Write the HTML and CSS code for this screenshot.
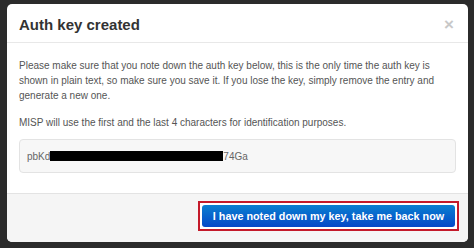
FILE: index.html
```html
<!DOCTYPE html>
<html>
<head>
<meta charset="utf-8">
<link rel="stylesheet" href="styles.css">
</head>
<body>
<div class="modal">
  <div class="modal-header">
    <h3 class="title">Auth key created</h3>
    <span class="close">×</span>
  </div>
  <div class="modal-body">
    <p class="para">Please make sure that you note down the auth key below, this is the only time the auth key is shown in plain text, so make sure you save it. If you lose the key, simply remove the entry and generate a new one.</p>
    <p class="para">MISP will use the first and the last 4 characters for identification purposes.</p>
    <div class="keybox"><span>pbKd</span><span class="redact"></span><span>74Ga</span></div>
  </div>
  <div class="modal-footer">
    <span class="highlight"><span class="btn">I have noted down my key, take me back now</span></span>
  </div>
</div>
</body>
</html>
```
FILE: styles.css
```css
html, body {
  margin: 0;
  padding: 0;
}
body {
  background: #2b2b2b;
  width: 474px;
  height: 248px;
  padding: 4px 6px 6px 7px;
  box-sizing: border-box;
  font-family: "Liberation Sans", Arial, sans-serif;
}
.modal {
  background: #fff;
  border-radius: 5px;
  width: 461px;
  height: 238px;
  display: flex;
  flex-direction: column;
  overflow: hidden;
}
.modal-header {
  height: 39px;
  box-sizing: border-box;
  border-bottom: 1px solid #e8e8e8;
  display: flex;
  align-items: center;
  justify-content: space-between;
  padding: 3px 14px 0 12px;
}
.title {
  margin: 0;
  font-size: 15px;
  font-weight: bold;
  color: #333;
  line-height: 20px;
}
.close {
  font-size: 17px;
  font-weight: bold;
  color: #c8c8c8;
  line-height: 20px;
}
.modal-body {
  flex: 1;
  padding: 15px 12px 0 12px;
}
.para {
  margin: 0 0 12px 0;
  font-size: 10px;
  line-height: 15px;
  color: #555;
}
.keybox {
  margin-top: -3px;
  height: 34px;
  box-sizing: border-box;
  border: 1px solid #e3e3e3;
  border-radius: 4px;
  background: #f7f7f7;
  display: flex;
  align-items: center;
  padding-left: 7px;
  font-size: 10px;
  color: #666;
}
.redact {
  display: inline-block;
  width: 173px;
  height: 10px;
  background: #000;
}
.modal-footer {
  height: 49px;
  box-sizing: border-box;
  background: #f5f5f5;
  border-top: 1px solid #e3e3e3;
  display: flex;
  justify-content: flex-end;
  align-items: flex-start;
  padding: 7px 9px 0 0;
}
.highlight {
  display: flex;
  border: 2px solid #c41a2a;
  padding: 2px;
  background: #fff;
}
.btn {
  display: block;
  width: 253px;
  height: 22px;
  box-sizing: border-box;
  background: linear-gradient(to bottom, #0a7fd0, #0448c8);
  border-radius: 3px;
  color: #fff;
  font-size: 10.8px;
  font-weight: bold;
  line-height: 22px;
  text-align: center;
}
```
